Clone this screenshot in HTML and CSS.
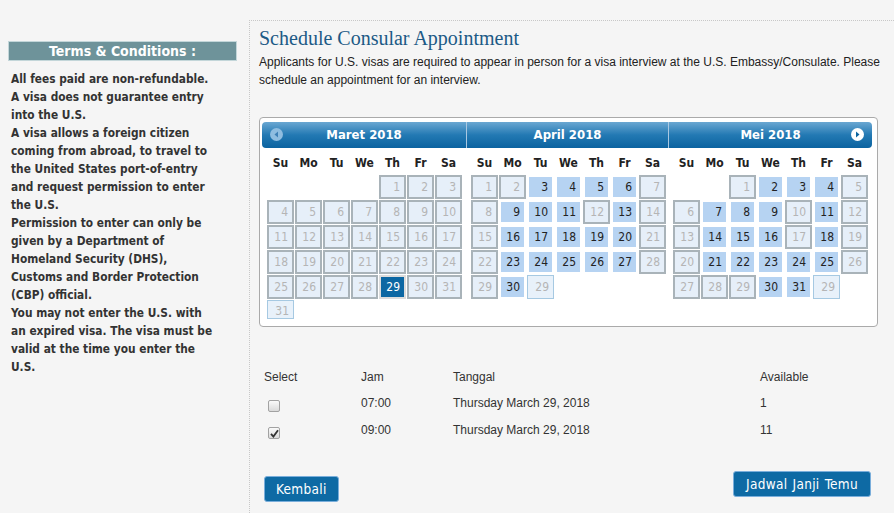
FILE: index.html
```html
<!DOCTYPE html>
<html lang="id">
  <head>
    <meta charset="UTF-8" />
    <meta name="viewport" content="width=device-width,initial-scale=1.0" />
    <title>Schedule Consular Appointment</title>
    <link rel="stylesheet" href="styles.css">
  </head>
  <body>
    <div class="page">
      <div class="sidebar">
        <div class="terms-title">Terms &amp; Conditions :</div>
        <div class="terms-text">
          All fees paid are non-refundable.<br />
          A visa does not guarantee entry into the U.S.<br />
          A visa allows a foreign citizen coming from abroad, to travel to the United States port-of-entry and request permission to enter the U.S.<br />
          Permission to enter can only be given by a Department of Homeland Security (DHS), Customs and Border Protection (CBP) official.<br />
          You may not enter the U.S. with an expired visa. The visa must be valid at the time you enter the U.S.
        </div>
      </div>

      <div class="main">
        <h1 class="page-title">Schedule Consular Appointment</h1>
        <p class="intro">
          Applicants for U.S. visas are required to appear in person for a visa interview at the U.S. Embassy/Consulate. Please
          schedule an appointment for an interview.
        </p>

        <div class="calendar">
          <div class="month first">
            <div class="month-header">
              <span class="nav prev"><svg width="13" height="13" viewBox="0 0 13 13"><circle cx="6.5" cy="6.5" r="6.5" fill="#8fbde0"/><path d="M8 3.5 L4.5 6.5 L8 9.5 Z" fill="#3f80b6"/></svg></span>
              Maret 2018
            </div>
            <div class="days">
              <div class="dn">Su</div><div class="dn">Mo</div><div class="dn">Tu</div><div class="dn">We</div><div class="dn">Th</div><div class="dn">Fr</div><div class="dn">Sa</div>
              <div></div><div></div><div></div><div></div><div class="off">1</div><div class="off">2</div><div class="off">3</div>
              <div class="off">4</div><div class="off">5</div><div class="off">6</div><div class="off">7</div><div class="off">8</div><div class="off">9</div><div class="off">10</div>
              <div class="off">11</div><div class="off">12</div><div class="off">13</div><div class="off">14</div><div class="off">15</div><div class="off">16</div><div class="off">17</div>
              <div class="off">18</div><div class="off">19</div><div class="off">20</div><div class="off">21</div><div class="off">22</div><div class="off">23</div><div class="off">24</div>
              <div class="off">25</div><div class="off">26</div><div class="off">27</div><div class="off">28</div><div class="sel">29</div><div class="off">30</div><div class="off">31</div>
              <div class="out short">31</div>
            </div>
          </div>

          <div class="month">
            <div class="month-header">April 2018</div>
            <div class="days">
              <div class="dn">Su</div><div class="dn">Mo</div><div class="dn">Tu</div><div class="dn">We</div><div class="dn">Th</div><div class="dn">Fr</div><div class="dn">Sa</div>
              <div class="off">1</div><div class="off">2</div><div class="on">3</div><div class="on">4</div><div class="on">5</div><div class="on">6</div><div class="off">7</div>
              <div class="off">8</div><div class="on">9</div><div class="on">10</div><div class="on">11</div><div class="off">12</div><div class="on">13</div><div class="off">14</div>
              <div class="off">15</div><div class="on">16</div><div class="on">17</div><div class="on">18</div><div class="on">19</div><div class="on">20</div><div class="off">21</div>
              <div class="off">22</div><div class="on">23</div><div class="on">24</div><div class="on">25</div><div class="on">26</div><div class="on">27</div><div class="off">28</div>
              <div class="off">29</div><div class="on">30</div><div class="out">29</div>
            </div>
          </div>

          <div class="month last">
            <div class="month-header">
              Mei 2018
              <span class="nav next"><svg width="13" height="13" viewBox="0 0 13 13"><circle cx="6.5" cy="6.5" r="6.5" fill="#ffffff"/><path d="M5 3.5 L8.5 6.5 L5 9.5 Z" fill="#0c659f"/></svg></span>
            </div>
            <div class="days">
              <div class="dn">Su</div><div class="dn">Mo</div><div class="dn">Tu</div><div class="dn">We</div><div class="dn">Th</div><div class="dn">Fr</div><div class="dn">Sa</div>
              <div></div><div></div><div class="off">1</div><div class="on">2</div><div class="on">3</div><div class="on">4</div><div class="off">5</div>
              <div class="off">6</div><div class="on">7</div><div class="on">8</div><div class="on">9</div><div class="off">10</div><div class="on">11</div><div class="off">12</div>
              <div class="off">13</div><div class="on">14</div><div class="on">15</div><div class="on">16</div><div class="off">17</div><div class="on">18</div><div class="off">19</div>
              <div class="off">20</div><div class="on">21</div><div class="on">22</div><div class="on">23</div><div class="on">24</div><div class="on">25</div><div class="off">26</div>
              <div class="off">27</div><div class="off">28</div><div class="off">29</div><div class="on">30</div><div class="on">31</div><div class="out">29</div>
            </div>
          </div>
        </div>

        <table class="slots">
          <tr>
            <th class="col-select">Select</th>
            <th class="col-jam">Jam</th>
            <th class="col-date">Tanggal</th>
            <th>Available</th>
          </tr>
          <tr>
            <td><span class="check"></span></td>
            <td>07:00</td>
            <td>Thursday March 29, 2018</td>
            <td>1</td>
          </tr>
          <tr>
            <td><span class="check"><svg width="9" height="9" viewBox="0 0 9 9"><path d="M1 4.8 L3.4 7.6 L8 1.2" stroke="#333" stroke-width="1.8" fill="none"/></svg></span></td>
            <td>09:00</td>
            <td>Thursday March 29, 2018</td>
            <td>11</td>
          </tr>
        </table>

        <div class="actions">
          <button class="btn back">Kembali</button>
          <button class="btn">Jadwal Janji Temu</button>
        </div>
      </div>
    </div>
  </body>
</html>
```

FILE: styles.css
```css
body {
  margin: 0;
  background-color: #f5f5f5;
  font-family: Arial, "Liberation Sans", sans-serif;
}
.page {
  display: flex;
  align-items: flex-start;
}
.sidebar {
  width: 229px;
  padding-left: 8px;
  padding-top: 41px;
  margin-right: 12px;
}
.terms-title {
  background-color: #6e939a;
  border: 1px solid #c3d6d9;
  color: white;
  text-align: center;
  font-family: "DejaVu Sans Condensed", "DejaVu Sans", sans-serif;
  font-weight: bold;
  font-size: 14px;
  height: 18px;
  line-height: 18px;
}
.terms-text {
  margin-top: 9px;
  padding-left: 3px;
  padding-right: 21px;
  font-family: "DejaVu Sans Condensed", "DejaVu Sans", sans-serif;
  font-weight: bold;
  font-size: 11.8px;
  line-height: 18px;
  color: #333;
}
.main {
  flex: 1;
  margin-top: 20px;
  border-top: 1px dotted #c8c8c8;
  border-left: 1px dotted #c8c8c8;
  padding: 5px 0 0 9px;
  min-height: 487px;
}
.page-title {
  margin: 0;
  font-family: "Liberation Serif", "DejaVu Serif", serif;
  font-weight: normal;
  font-size: 20px;
  line-height: 24px;
  color: #1c5a86;
}
.intro {
  margin: 3px 0 0 0;
  font-size: 12px;
  line-height: 18px;
  color: #222;
}
.calendar {
  display: flex;
  width: 612px;
  height: 204px;
  margin-top: 28px;
  padding: 4px 3px 0 2px;
  background-color: white;
  border: 1px solid #aaa;
  border-radius: 4px;
  font-family: "DejaVu Sans Condensed", "DejaVu Sans", sans-serif;
}
.month {
  width: 202px;
}
.month.first {
  width: 204px;
}
.month.last {
  width: 204px;
}
.month-header {
  position: relative;
  height: 26px;
  line-height: 26px;
  text-align: center;
  color: white;
  font-weight: bold;
  font-size: 13px;
  background: linear-gradient(#6aa7d2, #2379b3 50%, #0b63a0);
  border-left: 1px solid #a9c8e2;
}
.month.first .month-header {
  border-left: none;
  border-radius: 4px 0 0 4px;
}
.month.last .month-header {
  border-radius: 0 4px 4px 0;
}
.nav {
  position: absolute;
  top: 6px;
  height: 13px;
}
.nav svg {
  display: block;
}
.nav.prev {
  left: 8px;
}
.nav.next {
  right: 8px;
}
.days {
  display: grid;
  grid-template-columns: repeat(7, 27px);
  grid-auto-rows: 24px;
  gap: 1px;
  padding: 2px 0 0 5px;
}
.days div {
  box-sizing: border-box;
  text-align: right;
  padding-right: 4px;
  font-size: 12px;
  line-height: 20px;
  color: #222;
}
.days .dn {
  text-align: center;
  padding-right: 0;
  font-weight: bold;
  height: 28px;
  line-height: 26px;
}
.days .off {
  background-color: #e6eff9;
  border: 2px solid #a9b3b9;
  color: #b5b5b5;
}
.days .on {
  background-color: #b6d3f2;
  border: 2px solid white;
  color: #222;
}
.days .sel {
  background-color: #0c67a3;
  border: 2px solid #dcdcdc;
  color: white;
}
.days .out {
  background-color: #e8f1fa;
  border: 1px solid #a6c9e2;
  color: #b5b5b5;
  line-height: 22px;
}
.days .short {
  height: 19px;
  line-height: 20px;
}
.slots {
  margin-top: 43px;
  border-collapse: collapse;
  font-size: 12px;
  color: #333;
}
.slots th {
  text-align: left;
  font-weight: normal;
  padding: 0 0 6px 5px;
  height: 14px;
  line-height: 14px;
}
.slots td {
  box-sizing: border-box;
  height: 27px;
  padding: 6px 0 0 5px;
  vertical-align: top;
  line-height: 14px;
}
.col-select {
  width: 92px;
}
.col-jam {
  width: 87px;
}
.col-date {
  width: 302px;
}
.check {
  display: block;
  box-sizing: border-box;
  width: 12px;
  height: 12px;
  margin-left: 4px;
  margin-top: 4px;
  border: 1px solid #a2a2a2;
  border-radius: 2px;
  background: linear-gradient(#fafafa, #dadada);
}
.check svg {
  display: block;
  margin: 1px 0 0 1px;
}
.actions {
  display: flex;
  justify-content: space-between;
  align-items: flex-start;
  width: 612px;
  margin-top: 27px;
}
.btn {
  background-color: #0e6aa4;
  color: white;
  border: 1px solid #7aaedb;
  border-radius: 3px;
  font-family: "DejaVu Sans Condensed", "DejaVu Sans", sans-serif;
  font-size: 13.5px;
  letter-spacing: 0.3px;
  word-spacing: 1px;
  height: 26px;
  padding: 0 12px;
}
.btn.back {
  margin-top: 5px;
  margin-left: 5px;
  padding: 0 11px;
}
```
